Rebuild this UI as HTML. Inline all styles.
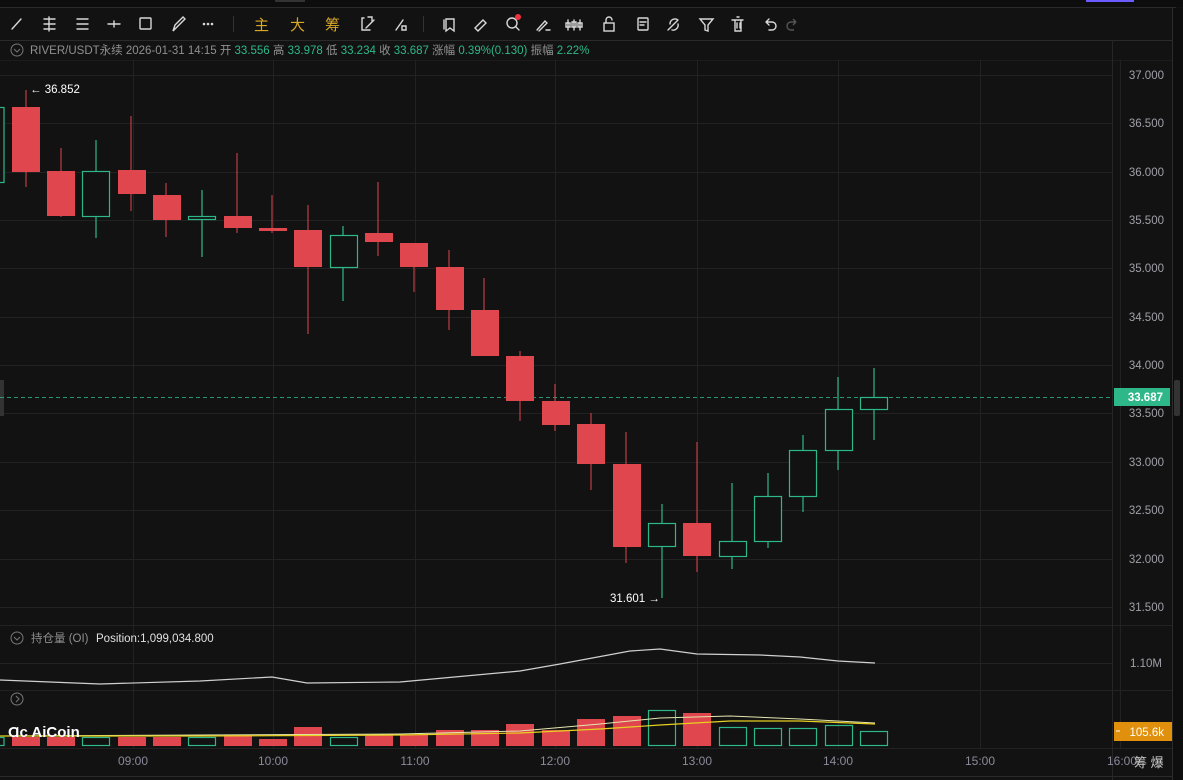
<!DOCTYPE html>
<html><head><meta charset="utf-8"><style>
html,body{margin:0;padding:0;background:#131313;width:1183px;height:780px;overflow:hidden}
svg{display:block}
text{font-family:"Liberation Sans","Noto Sans CJK SC",sans-serif}
</style></head><body>
<svg width="1183" height="780" viewBox="0 0 1183 780" xmlns="http://www.w3.org/2000/svg">
<rect width="1183" height="780" fill="#121212"/>
<rect x="0" y="0" width="1183" height="7" fill="#0d0d0d"/>
<rect x="275" y="0" width="30" height="2" fill="#333"/>
<rect x="1086" y="0" width="48" height="2" fill="#6a5cff"/>
<line x1="0" y1="7.5" x2="1176" y2="7.5" stroke="#2a2a2a"/>
<line x1="0" y1="40.5" x2="1176" y2="40.5" stroke="#2a2a2a"/>
<g stroke="#d8d8d8" stroke-width="1.4" fill="none" stroke-linecap="round">
<line x1="12" y1="29" x2="21" y2="19"/>
<path d="M44 19h11M44 24h11M44 29h11M49 17v14"/>
<path d="M77 19h11M77 24h11M77 29h11"/>
<path d="M108 24h12M114 21v6"/>
<rect x="140" y="18" width="11" height="11" rx="1"/>
<path d="M173 31l2-6 8-8 2 2-8 8z"/>
<path d="M364 18h-2v12h8M368 17h4v4M366 28l8-8"/>
<path d="M396 30l7-10M402 26h4v4h-4z"/>
<path d="M446 19h8v12l-4-3-4 3zM444 20v9"/>
<path d="M475 28l8-8 3 3-8 8z"/>
<circle cx="512" cy="23" r="5"/><path d="M516 27l3 3"/>
<path d="M537 30l8-9 2 2-8 8M546 30h4"/>
<path d="M568 20v10M574 20v10M580 20v10M566 23h4v4h-4zM572 22h4v5h-4zM578 23h4v4h-4z"/>
<rect x="604" y="23" width="10" height="8"/><path d="M606 23v-3a3 3 0 0 1 6 0"/>
<rect x="638" y="18" width="10" height="12" rx="1"/><path d="M640 22h6M640 25h4"/>
<path d="M668 30l10-10M670 24a5 5 0 0 1 8-4M672 30a5 5 0 0 0 6-6"/>
<path d="M700 19h13l-5 6v6l-3-1v-5z"/>
<path d="M732 20h11M735 20v11h6v-11M737 17h2M737 23v5M740 23v5"/>
<path d="M766 22h6a4 4 0 0 1 0 8h-3M766 22l3-3M766 22l3 3"/>
</g>
<circle cx="518" cy="17" r="3" fill="#f0313f"/>
<path d="M796 22h-5a4 4 0 0 0 0 8h3M796 22l-3-3M796 22l-3 3" stroke="#555" stroke-width="1.4" fill="none"/>
<g fill="#d8d8d8"><circle cx="204" cy="24" r="1.3"/><circle cx="208" cy="24" r="1.3"/><circle cx="212" cy="24" r="1.3"/></g>
<line x1="233.5" y1="16" x2="233.5" y2="32" stroke="#333"/>
<line x1="423.5" y1="16" x2="423.5" y2="32" stroke="#333"/>
<g fill="#d9a826" font-size="15"><text x="254" y="30">主</text><text x="290" y="30">大</text><text x="325" y="30">筹</text></g>
<circle cx="17" cy="50" r="6" fill="none" stroke="#777"/><path d="M14 49l3 3 3-3" stroke="#777" fill="none"/>
<text x="30" y="54" font-size="11.5" fill="#909090">RIVER/USDT永续 2026-01-31 14:15 开 <tspan fill="#2eb88a">33.556</tspan> 高 <tspan fill="#2eb88a">33.978</tspan> 低 <tspan fill="#2eb88a">33.234</tspan> 收 <tspan fill="#2eb88a">33.687</tspan> 涨幅 <tspan fill="#2eb88a">0.39%(0.130)</tspan> 振幅 <tspan fill="#2eb88a">2.22%</tspan></text>
<line x1="0" y1="60.5" x2="1176" y2="60.5" stroke="#1c1c1c"/>
<g stroke="#222">
<path d="M0 75.5H1112M0 123.5H1112M0 172.5H1112M0 220.5H1112M0 268.5H1112M0 317.5H1112M0 365.5H1112M0 413.5H1112M0 462.5H1112M0 510.5H1112M0 559.5H1112M0 607.5H1112"/>
<path d="M133.5 60V748M273.5 60V748M415.5 60V748M555.5 60V748M697.5 60V748M838.5 60V748M980.5 60V748M1120.5 60V748"/>
<path d="M0 625.5H1176M0 690.5H1176M0 748.5H1176M0 663.5H1112"/>
</g>
<line x1="1112.5" y1="40" x2="1112.5" y2="780" stroke="#262626"/>
<rect x="1172" y="8" width="11" height="772" fill="#0e0e0e"/>
<line x1="1172.5" y1="8" x2="1172.5" y2="780" stroke="#2c2c2c"/>
<rect x="1174" y="380" width="6" height="36" rx="2" fill="#333"/>
<rect x="0" y="380" width="4" height="36" fill="#333"/>
<g font-size="11.5" fill="#a0a0a8" text-anchor="end">
<text x="1164" y="79">37.000</text><text x="1164" y="127">36.500</text><text x="1164" y="176">36.000</text><text x="1164" y="224">35.500</text><text x="1164" y="272">35.000</text><text x="1164" y="321">34.500</text><text x="1164" y="369">34.000</text><text x="1164" y="417">33.500</text><text x="1164" y="466">33.000</text><text x="1164" y="514">32.500</text><text x="1164" y="563">32.000</text><text x="1164" y="611">31.500</text>
<text x="1162" y="667">1.10M</text>
</g>
<line x1="0" y1="397.5" x2="1112" y2="397.5" stroke="#2eb88a" stroke-dasharray="4 3" opacity="0.8"/>
<rect x="1114" y="388" width="56" height="18" fill="#2eb88a"/>
<text x="1163" y="401" font-size="11.5" fill="#fff" text-anchor="end" font-weight="bold">33.687</text>
<g stroke="#e0464e" fill="#e0464e">
<line x1="26" y1="90" x2="26" y2="187"/><rect x="12" y="107" width="28" height="65" stroke="none"/>
<line x1="61" y1="148" x2="61" y2="217"/><rect x="47" y="171" width="28" height="45" stroke="none"/>
<line x1="131" y1="116" x2="131" y2="211"/><rect x="118" y="170" width="28" height="24" stroke="none"/>
<line x1="166" y1="183" x2="166" y2="237"/><rect x="153" y="195" width="28" height="25" stroke="none"/>
<line x1="237" y1="153" x2="237" y2="233"/><rect x="224" y="216" width="28" height="12" stroke="none"/>
<line x1="272" y1="195" x2="272" y2="233"/><rect x="259" y="228" width="28" height="3" stroke="none"/>
<line x1="308" y1="205" x2="308" y2="334"/><rect x="294" y="230" width="28" height="37" stroke="none"/>
<line x1="378" y1="182" x2="378" y2="256"/><rect x="365" y="233" width="28" height="9" stroke="none"/>
<line x1="414" y1="243" x2="414" y2="292"/><rect x="400" y="243" width="28" height="24" stroke="none"/>
<line x1="449" y1="250" x2="449" y2="330"/><rect x="436" y="267" width="28" height="43" stroke="none"/>
<line x1="484" y1="278" x2="484" y2="356"/><rect x="471" y="310" width="28" height="46" stroke="none"/>
<line x1="520" y1="351" x2="520" y2="421"/><rect x="506" y="356" width="28" height="45" stroke="none"/>
<line x1="555" y1="384" x2="555" y2="431"/><rect x="542" y="401" width="28" height="24" stroke="none"/>
<line x1="591" y1="413" x2="591" y2="490"/><rect x="577" y="424" width="28" height="40" stroke="none"/>
<line x1="626" y1="432" x2="626" y2="563"/><rect x="613" y="464" width="28" height="83" stroke="none"/>
<line x1="697" y1="442" x2="697" y2="572"/><rect x="683" y="523" width="28" height="33" stroke="none"/>
</g>
<g stroke="#2eb88a" fill="#121212" stroke-width="1.2">
<rect x="-5" y="107.5" width="9" height="75"/>
<line x1="96" y1="140" x2="96" y2="238"/><rect x="82.5" y="171.5" width="27" height="45"/>
<line x1="202" y1="190" x2="202" y2="257"/><rect x="188.5" y="216.5" width="27" height="3"/>
<line x1="343" y1="226" x2="343" y2="301"/><rect x="330.5" y="235.5" width="27" height="32"/>
<line x1="662" y1="504" x2="662" y2="598"/><rect x="648.5" y="523.5" width="27" height="23"/>
<line x1="732" y1="483" x2="732" y2="569"/><rect x="719.5" y="541.5" width="27" height="15"/>
<line x1="768" y1="473" x2="768" y2="548"/><rect x="754.5" y="496.5" width="27" height="45"/>
<line x1="803" y1="435" x2="803" y2="512"/><rect x="789.5" y="450.5" width="27" height="46"/>
<line x1="838" y1="377" x2="838" y2="470"/><rect x="825.5" y="409.5" width="27" height="41"/>
<line x1="874" y1="368" x2="874" y2="440"/><rect x="860.5" y="397.5" width="27" height="12"/>
</g>
<text x="30" y="93" font-size="11.5" fill="#fff">← 36.852</text>
<text x="610" y="602" font-size="11.5" fill="#fff">31.601 →</text>
<circle cx="17" cy="638" r="6" fill="none" stroke="#777"/><path d="M14 637l3 3 3-3" stroke="#777" fill="none"/>
<text x="31" y="642" font-size="11.5" fill="#909090">持仓量 (OI)</text>
<text x="96" y="642" font-size="11.5" fill="#e0e0e0">Position:1,099,034.800</text>
<polyline fill="none" stroke="#d0d0d0" stroke-width="1.2" points="0,680 25,681 100,684 200,681 272,677 307,683 400,682 520,671 560,664 630,651 660,649 697,654 760,655 800,657 838,661 875,663"/>
<circle cx="17" cy="699" r="6" fill="none" stroke="#777"/><path d="M16 696l3 3-3 3" stroke="#777" fill="none"/>
<g fill="#e0464e">
<rect x="12" y="737" width="28" height="9"/><rect x="47" y="737" width="28" height="9"/><rect x="118" y="737" width="28" height="9"/><rect x="153" y="737" width="28" height="9"/><rect x="224" y="735" width="28" height="11"/><rect x="259" y="739" width="28" height="7"/><rect x="294" y="727" width="28" height="19"/><rect x="365" y="735" width="28" height="11"/><rect x="400" y="735" width="28" height="11"/><rect x="436" y="730" width="28" height="16"/><rect x="471" y="730" width="28" height="16"/><rect x="506" y="724" width="28" height="22"/><rect x="542" y="730" width="28" height="16"/><rect x="577" y="719" width="28" height="27"/><rect x="613" y="716" width="28" height="30"/><rect x="683" y="713" width="28" height="33"/>
</g>
<g fill="none" stroke="#2eb88a" stroke-width="1.2">
<rect x="-5" y="737.5" width="9" height="8"/><rect x="82.5" y="737.5" width="27" height="8"/><rect x="188.5" y="737.5" width="27" height="8"/><rect x="330.5" y="737.5" width="27" height="8"/><rect x="648.5" y="710.5" width="27" height="35"/><rect x="719.5" y="727.5" width="27" height="18"/><rect x="754.5" y="728.5" width="27" height="17"/><rect x="789.5" y="728.5" width="27" height="17"/><rect x="825.5" y="725.5" width="27" height="20"/><rect x="860.5" y="731.5" width="27" height="14"/>
</g>
<polyline fill="none" stroke="#e6e6b0" stroke-width="1" points="0,736 200,735 400,734 520,731 600,724 660,718 730,716 800,719 875,723"/>
<polyline fill="none" stroke="#e8d020" stroke-width="1.2" points="0,736 200,736 400,735 520,733 600,729 660,725 730,721 800,721 875,724"/>
<text x="8" y="737" font-size="15" font-weight="bold" fill="#fff">Ɑc AiCoin</text>
<rect x="1114" y="722" width="58" height="19" fill="#e0900c"/>
<text x="1164" y="736" font-size="11.5" fill="#fff" text-anchor="end">105.6k</text>
<line x1="1116" y1="731" x2="1120" y2="731" stroke="#fff"/>
<g font-size="12" fill="#8a8a9a" text-anchor="middle">
<text x="133" y="765">09:00</text><text x="273" y="765">10:00</text><text x="415" y="765">11:00</text><text x="555" y="765">12:00</text><text x="697" y="765">13:00</text><text x="838" y="765">14:00</text><text x="980" y="765">15:00</text><text x="1122" y="765">16:00</text>
</g>
<text x="1134" y="767" font-size="13" fill="#ccc">筹 爆</text>
<line x1="0" y1="776.5" x2="1172" y2="776.5" stroke="#2a2a2a"/>
</svg>
</body></html>
